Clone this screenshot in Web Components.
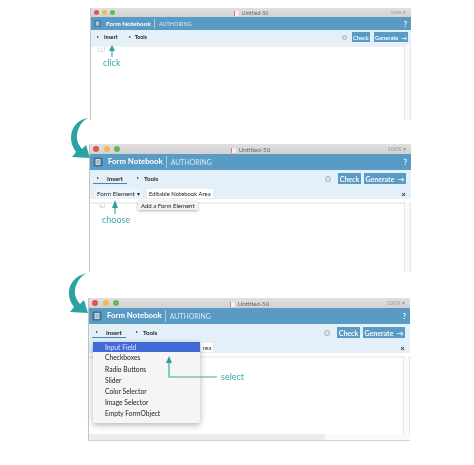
<!DOCTYPE html>
<html>
<head>
<meta charset="utf-8">
<style>
  html, body { margin: 0; padding: 0; background: #fff; }
  body { display: flow-root; width: 474px; height: 465px; overflow: hidden; position: relative; font-family: "Lato", "Liberation Sans", sans-serif; }
</style>
</head>
<body>
<nb-window mode="click" style="--x:90px;--top:8px;--w:321px;--h:112px"></nb-window>
<nb-window mode="choose" style="--x:89px;--top:24px;--w:322px;--h:128px"></nb-window>
<nb-window mode="select" style="--x:88px;--top:26px;--w:322px;--h:143px"></nb-window>
<nb-overlay></nb-overlay>
<script>
class NbWindow extends HTMLElement {
  constructor() {
    super()
    this.attachShadow({ mode: 'open' })
  }
  connectedCallback() {
    const mode = this.getAttribute('mode')
    // in the select step the menu covers the row: only the end of the second chip shows
    const sub = mode === 'choose'
      ? `<span class="chip plain">Form Element ▾</span><span class="chip">Editable Notebook Area</span>`
      : `<span class="covered"></span><span class="chip">rea</span>`
    this.shadowRoot.innerHTML = `${NbWindow.css()}
      <div class="title">
        <span class="lights"><i style="background:#e0554c"></i><i style="background:#f2bb52"></i><i style="background:#62b95a"></i></span>
        <span class="name"><b></b>Untitled-50</span>
        <span class="zoom">100% ▾</span>
      </div>
      <div class="head">
        <svg class="doc" viewBox="0 0 10 10"><rect x=".5" y=".5" width="9" height="9" rx="1" fill="#3f6f92"/><rect x="2.500" y="2" width="5" height="6" fill="#cfdde8"/><path d="M3.500 4h3M3.500 6h3" stroke="#3f6f92" stroke-width=".7"/></svg>
        <span class="brand">Form Notebook</span><span class="role">AUTHORING</span>
        <span class="help">?</span>
      </div>
      <div class="bar">
        <div class="tabs">
          <span class="tab on"><em></em>Insert</span>
          <span class="tab"><em></em>Tools</span>
          <span class="ring"></span>
          <span class="btn check">Check</span>
          <span class="btn gen">Generate<s>→</s></span>
        </div>
        ${mode === 'click' ? '' : `<div class="sub">${sub}<span class="close">×</span></div>`}
      </div>
      <div class="body">
        <div class="main"><span class="cell">+</span></div>
        <div class="strip"></div>
      </div>
      ${mode === 'select' ? '<div class="hbar"><span></span></div>' : ''}`
  }
  static css() {
    return `<style>
      :host { --title: 10px; --head: 16px; --bf: 7.8px; --rf: 6.9px; --tf: 6.2px; --btn: 7px; --btn-h: 11px; --check: 23px; --gen: 42px; --btn-gap: 3px;
        --light: 6px; --light-gap: 4.5px; --light-pad: 3px; --tab-x: 3px; --tab-gap: 6px; --em1: 10px; --em2: 7px; --ring: 6px; --ring-gap: 7px;
        --pad-top: 3px; --icon: 10px; --name: 6.2px; --zoomf: 5.5px; --cell-x: 9px; --cell-w: 6px; --cell-h: 4px; --gap-below: 3px; --pad-r: 5px; }
      :host([mode="click"]) { --title: 9px; --head: 13px; --bf: 6.4px; --rf: 5.5px; --tf: 5.3px; --btn: 5.7px; --btn-h: 10px; --check: 18px; --gen: 34px; --btn-gap: 4px;
        --light: 5px; --light-gap: 3.3px; --light-pad: 2.5px; --tab-x: 2px; --tab-gap: 3px; --em1: 7px; --em2: 6px; --ring: 5px; --ring-gap: 5px;
        --pad-top: 2px; --icon: 7px; --name: 5.2px; --zoomf: 4.5px; --cell-x: 7px; --cell-w: 7px; --cell-h: 5px; --gap-below: 0px; --pad-r: 3px; }
      :host { display: flex; flex-direction: column; margin: var(--top) 0 0 var(--x); width: var(--w); height: var(--h); box-sizing: border-box; border-left: 1px solid #c4c4c4; font-family: "Lato", "Liberation Sans", sans-serif; overflow: hidden; background: #fff; filter: blur(.25px); }
      .title { flex: none; height: var(--title); background: linear-gradient(#e0e0e0, #d2d2d2); display: flex; align-items: center; padding: 0 5px 0 var(--light-pad); position: relative; font-size: var(--name); color: #666; }
      .lights { display: flex; gap: var(--light-gap); }
      .lights i { width: var(--light); height: var(--light); border-radius: 50%; display: block; }
      .name { position: absolute; left: 0; right: 0; text-align: center; }
      .name b { display: inline-block; width: 4px; height: 5px; background: #f8efec; border-left: 1px solid #e07a70; margin-right: 3px; vertical-align: -1px; }
      .zoom { margin-left: auto; font-size: var(--zoomf); color: #999; }
      .head { flex: none; height: var(--head); background: #5a9bc6; display: flex; align-items: center; padding: 0 4px 0 3px; color: #fff; }
      .doc { width: var(--icon); height: var(--icon); margin-right: 5px; }
      .brand { font-weight: 700; font-size: var(--bf); padding-right: 3px; margin-right: 4px; border-right: 1px solid #a5c9e0; line-height: 1.5; }
      .role { font-size: var(--rf); color: #d6e8f4; }
      .help { margin-left: auto; font-size: 7px; font-weight: 700; }
      .bar { flex: none; background: #e3f0f9; padding: var(--pad-top) var(--pad-r) 2px var(--tab-x); }
      .tabs { display: flex; align-items: center; height: var(--btn-h); padding-bottom: 1px; }
      .tab { display: flex; align-items: center; height: 100%; box-sizing: border-box; padding: 0 4px; margin-right: var(--tab-gap); font-size: var(--tf); font-weight: 700; color: #1d1d1d; border-bottom: 1px solid transparent; }
      .tab em { display: block; width: var(--em2); }
      .tab.on em { width: var(--em1); }
      .tab em::before { content: ""; display: block; width: 0; border: solid transparent; border-width: 1.5px 0 1.5px 2px; border-left-color: #333; }
      :host(:not([mode="click"])) .tab.on { border-bottom-color: #4a87ad; }
      .ring { margin-left: auto; margin-right: var(--ring-gap); width: var(--ring); height: var(--ring); box-sizing: border-box; border: 1px solid #aab0b4; border-radius: 50%; background: #dfe4e7; }
      .btn { display: flex; align-items: center; justify-content: center; gap: 3px; height: var(--btn-h); background: #5a9bc6; color: #f4f9fc; font-size: var(--btn); font-weight: 700; margin-left: var(--btn-gap); }
      .check { width: var(--check); margin-left: 0; }
      .gen { width: var(--gen); }
      .btn s { text-decoration: none; }
      .sub { display: flex; align-items: center; gap: 5px; margin: 4px 0 -1px 2px; height: 9px; }
      .covered { flex: none; width: 102px; }
      .chip { box-sizing: border-box; height: 9px; line-height: 9px; background: #fff; font-size: 5.9px; color: #222; padding: 0 2px; white-space: nowrap; }
      .chip.plain { width: 47px; background: #edf5fb; font-size: 6.2px; }
      .close { margin-left: auto; font-size: 8px; font-weight: 700; color: #333; }
      .body { flex: 1; min-height: 0; display: flex; margin-top: var(--gap-below); }
      .main { flex: 1; border-top: 2px solid #efefef; padding-left: var(--cell-x); }
      .strip { flex: none; width: 5px; border: solid #e6e6e6; border-width: 0 1px; background: #f9f9f9; }
      .cell { display: block; box-sizing: border-box; width: var(--cell-w); height: var(--cell-h); background: #fff; border: 1px solid #ddd; border-top: 0; border-radius: 0 0 2px 2px; font-size: 4px; line-height: 3px; text-align: center; color: #999; }
      .hbar { flex: none; height: 7px; background: #f9f9f9; border-bottom: 1px solid #d4d4d4; box-sizing: border-box; }
      .hbar span { display: block; width: 236px; height: 100%; background: #ececec; }
    </style>`
  }
}
customElements.define('nb-window', NbWindow)

class NbOverlay extends HTMLElement {
  constructor() {
    super()
    this.attachShadow({ mode: 'open' })
  }
  connectedCallback() {
    this.shadowRoot.innerHTML = `<style>
      :host { position: absolute; inset: 0; font-family: "Lato", "Liberation Sans", sans-serif; filter: blur(.25px); }
      .note { position: absolute; color: #3fa8a6; font-size: 9px; line-height: 12px; }
      .tip { position: absolute; left: 138px; top: 201px; background: #f1f1f1; font-size: 6px; line-height: 9px; color: #222; padding: 0 3px; box-shadow: 0 1px 3px rgba(0,0,0,.3); }
      .menu { position: absolute; left: 93px; top: 342px; width: 107px; background: #f5f5f5; box-shadow: 0 2px 6px rgba(0,0,0,.3); border-radius: 2px; font-size: 6.7px; color: #222; padding-bottom: 3px; }
      .menu div { height: 11.2px; line-height: 11.2px; padding-left: 12px; }
      .menu .sel { background: #4169d8; color: #dfe6f8; height: 10px; line-height: 10px; margin-bottom: .4px; }
      svg { position: absolute; left: 0; top: 0; width: 474px; height: 465px; }
    </style>
    <span class="note" style="left:103px;top:57px">click</span>
    <span class="note" style="left:102px;top:214px">choose</span>
    <span class="note" style="left:221px;top:371px">select</span>
    <span class="tip">Add a Form Element</span>
    <div class="menu">
      <div class="sel">Input Field</div><div>Checkboxes</div><div>Radio Buttons</div><div>Slider</div>
      <div>Color Selector</div><div>Image Selector</div><div>Empty FormObject</div>
    </div>
    <svg viewBox="0 0 474 465" fill="none">
      <path d="M112 57V49" stroke="#3fa8a6" stroke-width="1.2"/><path d="M109 51L112 45L115 51Z" fill="#2f9f9c"/>
      <path d="M115 214V206" stroke="#3fa8a6" stroke-width="1.2"/><path d="M112 208L115 200L118 208Z" fill="#2f9f9c"/>
      <path d="M217 377H169V361" stroke="#3fa8a6" stroke-width="1.2"/><path d="M166 363L169 356L172 363Z" fill="#2f9f9c"/>
      <path d="M88 118C76 120 71 129 71 138C71 143 73 148 76 152L72 157L90 158L86 145L82 149C78 144 76.500 140 77 135C78 127 82 121 88 118Z" fill="#2ba3a0"/>
      <path d="M87 273C74 276 68 285 69 295C69 299 71 303 74 307L70 312L88 313L84 300L80 304C76 299 74.500 295 75 290C76 282 81 276 87 273Z" fill="#2ba3a0"/>
    </svg>`
  }
}
customElements.define('nb-overlay', NbOverlay)
</script>
</body>
</html>
